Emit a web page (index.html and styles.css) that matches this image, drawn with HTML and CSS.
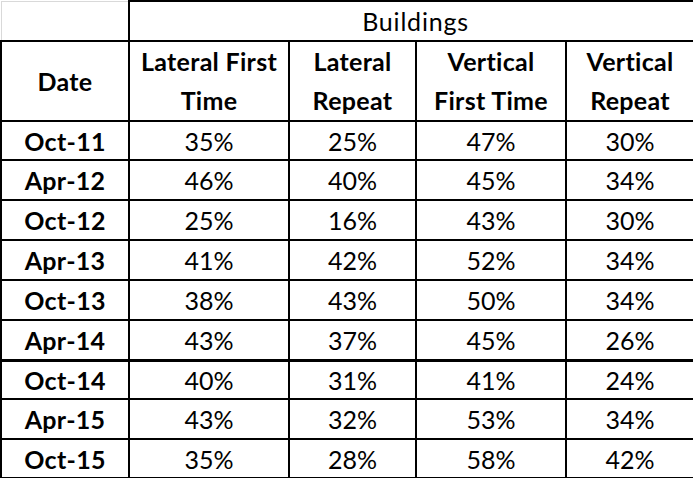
FILE: index.html
```html
<!DOCTYPE html>
<html>
<head>
<meta charset="utf-8">
<link rel="stylesheet" href="styles.css">
</head>
<body>
<table class="grid">
  <colgroup>
    <col class="c-date">
    <col class="c-lft">
    <col class="c-lr">
    <col class="c-vft">
    <col class="c-vr">
  </colgroup>
  <tr class="r-group">
    <td class="corner"></td>
    <td class="group" colspan="4">Buildings</td>
  </tr>
  <tr class="r-head">
    <th>Date</th>
    <th>Lateral First<br>Time</th>
    <th>Lateral<br>Repeat</th>
    <th>Vertical<br>First Time</th>
    <th>Vertical<br>Repeat</th>
  </tr>
  <tr class="r-data short"><th>Oct-11</th><td>35%</td><td>25%</td><td>47%</td><td>30%</td></tr>
  <tr class="r-data"><th>Apr-12</th><td>46%</td><td>40%</td><td>45%</td><td>34%</td></tr>
  <tr class="r-data"><th>Oct-12</th><td>25%</td><td>16%</td><td>43%</td><td>30%</td></tr>
  <tr class="r-data"><th>Apr-13</th><td>41%</td><td>42%</td><td>52%</td><td>34%</td></tr>
  <tr class="r-data"><th>Oct-13</th><td>38%</td><td>43%</td><td>50%</td><td>34%</td></tr>
  <tr class="r-data thick"><th>Apr-14</th><td>43%</td><td>37%</td><td>45%</td><td>26%</td></tr>
  <tr class="r-data short"><th>Oct-14</th><td>40%</td><td>31%</td><td>41%</td><td>24%</td></tr>
  <tr class="r-data"><th>Apr-15</th><td>43%</td><td>32%</td><td>53%</td><td>34%</td></tr>
  <tr class="r-data short"><th>Oct-15</th><td>35%</td><td>28%</td><td>58%</td><td>42%</td></tr>
</table>
</body>
</html>
```
FILE: styles.css
```css
html, body {
  margin: 0;
  padding: 0;
  background: #ffffff;
}

.grid {
  border-collapse: collapse;
  table-layout: fixed;
  width: 693px;
  font-family: Lato, "Liberation Sans", sans-serif;
  font-size: 25px;
  color: #000;
}

.c-date { width: 128px; }
.c-lft { width: 160px; }
.c-lr { width: 127px; }
.c-vft { width: 150px; }
.c-vr { width: 128px; }

.grid td,
.grid th {
  border: 2px solid #000;
  padding: 0;
  text-align: center;
  vertical-align: middle;
  line-height: 30px;
}

.grid th {
  font-weight: 700;
  letter-spacing: 0.3px;
}

.grid td {
  font-weight: 400;
}

.grid .group {
  letter-spacing: 0.8px;
  padding-left: 8px;
}

.r-head th {
  line-height: 39px;
}

.grid .corner {
  border-top: 1px solid #d9d9d9;
  border-left: 1px solid #d9d9d9;
}

.r-group { height: 40px; }
.r-head { height: 80px; }
.r-data { height: 40px; }
.r-data.short { height: 39px; }

.r-data.thick th,
.r-data.thick td {
  border-bottom-width: 3px;
}
```
